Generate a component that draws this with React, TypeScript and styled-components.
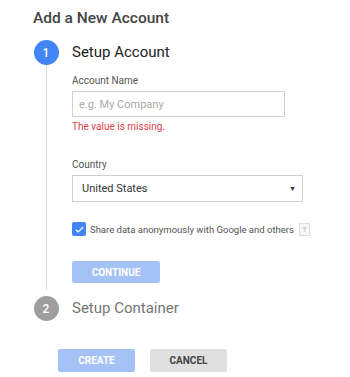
import React from 'react'
import styled, { createGlobalStyle } from 'styled-components'

const GlobalStyle = createGlobalStyle`
  body {
    margin: 0;
    background: #fff;
    font-family: Roboto, "Liberation Sans", sans-serif;
  }
`

const Page = styled.div`
  width: 350px;
  height: 377px;
  padding: 8px 0 0 33px;
  box-sizing: border-box;
  overflow: hidden;
`

const Title = styled.h1`
  margin: 0 0 12px;
  font-size: 15.5px;
  font-weight: 500;
  line-height: 20px;
  color: #444;
`

const Step = styled.div`
  display: grid;
  grid-template-columns: 26px 1fr;
  column-gap: 13px;
`

const Marker = styled.div<{ $rows?: number }>`
  grid-row: 1 / span ${(p) => p.$rows ?? 1};
  display: flex;
  flex-direction: column;
  align-items: center;
`

const Circle = styled.div<{ $active?: boolean }>`
  width: 25px;
  height: 25px;
  border-radius: 50%;
  flex: none;
  background: ${(p) => (p.$active ? '#4285f4' : '#9e9e9e')};
  color: #fff;
  font-size: 12px;
  font-weight: 500;
  display: flex;
  align-items: center;
  justify-content: center;
`

const Line = styled.div`
  flex: 1;
  width: 1px;
  background: #dcdcdc;
  margin-bottom: 6px;
`

const StepTitle = styled.div<{ $muted?: boolean }>`
  font-size: 15px;
  line-height: 25px;
  color: ${(p) => (p.$muted ? '#757575' : '#222')};
`

const Body = styled.div`
  grid-column: 2;
  padding: 9px 0 13px;
`

const Label = styled.div`
  font-size: 10px;
  line-height: 13px;
  color: #555;
  margin-bottom: 4px;
`

const Input = styled.input`
  display: block;
  width: 213px;
  height: 26px;
  box-sizing: border-box;
  border: 1px solid #d0d0d0;
  padding: 0 6px;
  font-family: inherit;
  font-size: 11px;
  color: #333;
  outline: none;
  &::placeholder {
    color: #aaa;
  }
`

const Error = styled.div`
  font-size: 10px;
  line-height: 13px;
  color: #e2404a;
  margin: 3px 0 25px;
`

const Select = styled.div`
  width: 231px;
  height: 27px;
  box-sizing: border-box;
  border: 1px solid #d0d0d0;
  padding: 0 6px 0 9px;
  display: flex;
  align-items: center;
  justify-content: space-between;
  font-size: 11px;
  color: #333;
`

const Arrow = styled.span`
  font-size: 7px;
  color: #333;
`

const CheckRow = styled.div`
  display: flex;
  align-items: center;
  margin-top: 20px;
  gap: 4px;
  font-size: 9.5px;
  color: #555;
`

const Box = styled.div`
  width: 14px;
  height: 14px;
  border-radius: 2px;
  background: #4285f4;
  display: flex;
  align-items: center;
  justify-content: center;
  flex: none;
`

const Help = styled.span`
  margin-left: 1px;
  width: 9px;
  height: 11px;
  border: 1px solid #ddd;
  background: #f7f7f7;
  color: #aaa;
  font-size: 8px;
  line-height: 11px;
  text-align: center;
`

const Button = styled.button<{ $plain?: boolean }>`
  border: none;
  border-radius: 2px;
  height: 23px;
  padding: 0;
  font-family: inherit;
  font-size: 10px;
  font-weight: 700;
  background: ${(p) => (p.$plain ? '#e0e0e0' : '#a4c2f6')};
  color: ${(p) => (p.$plain ? '#444' : '#fff')};
`

const Continue = styled(Button)`
  display: block;
  width: 88px;
  height: 22px;
  margin-top: 25px;
`

const Footer = styled.div`
  display: flex;
  gap: 15px;
  margin: 28px 0 0 25px;
`

const Wide = styled(Button)`
  width: 77px;
`

export default function App() {
  return (
    <Page>
      <GlobalStyle />
      <Title>Add a New Account</Title>
      <Step>
        <Marker $rows={2}>
          <Circle $active>1</Circle>
          <Line />
        </Marker>
        <StepTitle>Setup Account</StepTitle>
        <Body>
          <Label>Account Name</Label>
          <Input placeholder="e.g. My Company" />
          <Error>The value is missing.</Error>
          <Label>Country</Label>
          <Select>
            <span>United States</span>
            <Arrow>▼</Arrow>
          </Select>
          <CheckRow>
            <Box>
              <svg width="11" height="11" viewBox="0 0 24 24">
                <path d="M4 12.5l5 5L20 6.5" fill="none" stroke="#fff" strokeWidth="2.6" />
              </svg>
            </Box>
            <span>Share data anonymously with Google and others</span>
            <Help>?</Help>
          </CheckRow>
          <Continue>CONTINUE</Continue>
        </Body>
      </Step>
      <Step>
        <Marker>
          <Circle>2</Circle>
        </Marker>
        <StepTitle $muted>Setup Container</StepTitle>
      </Step>
      <Footer>
        <Wide>CREATE</Wide>
        <Wide $plain>CANCEL</Wide>
      </Footer>
    </Page>
  )
}
